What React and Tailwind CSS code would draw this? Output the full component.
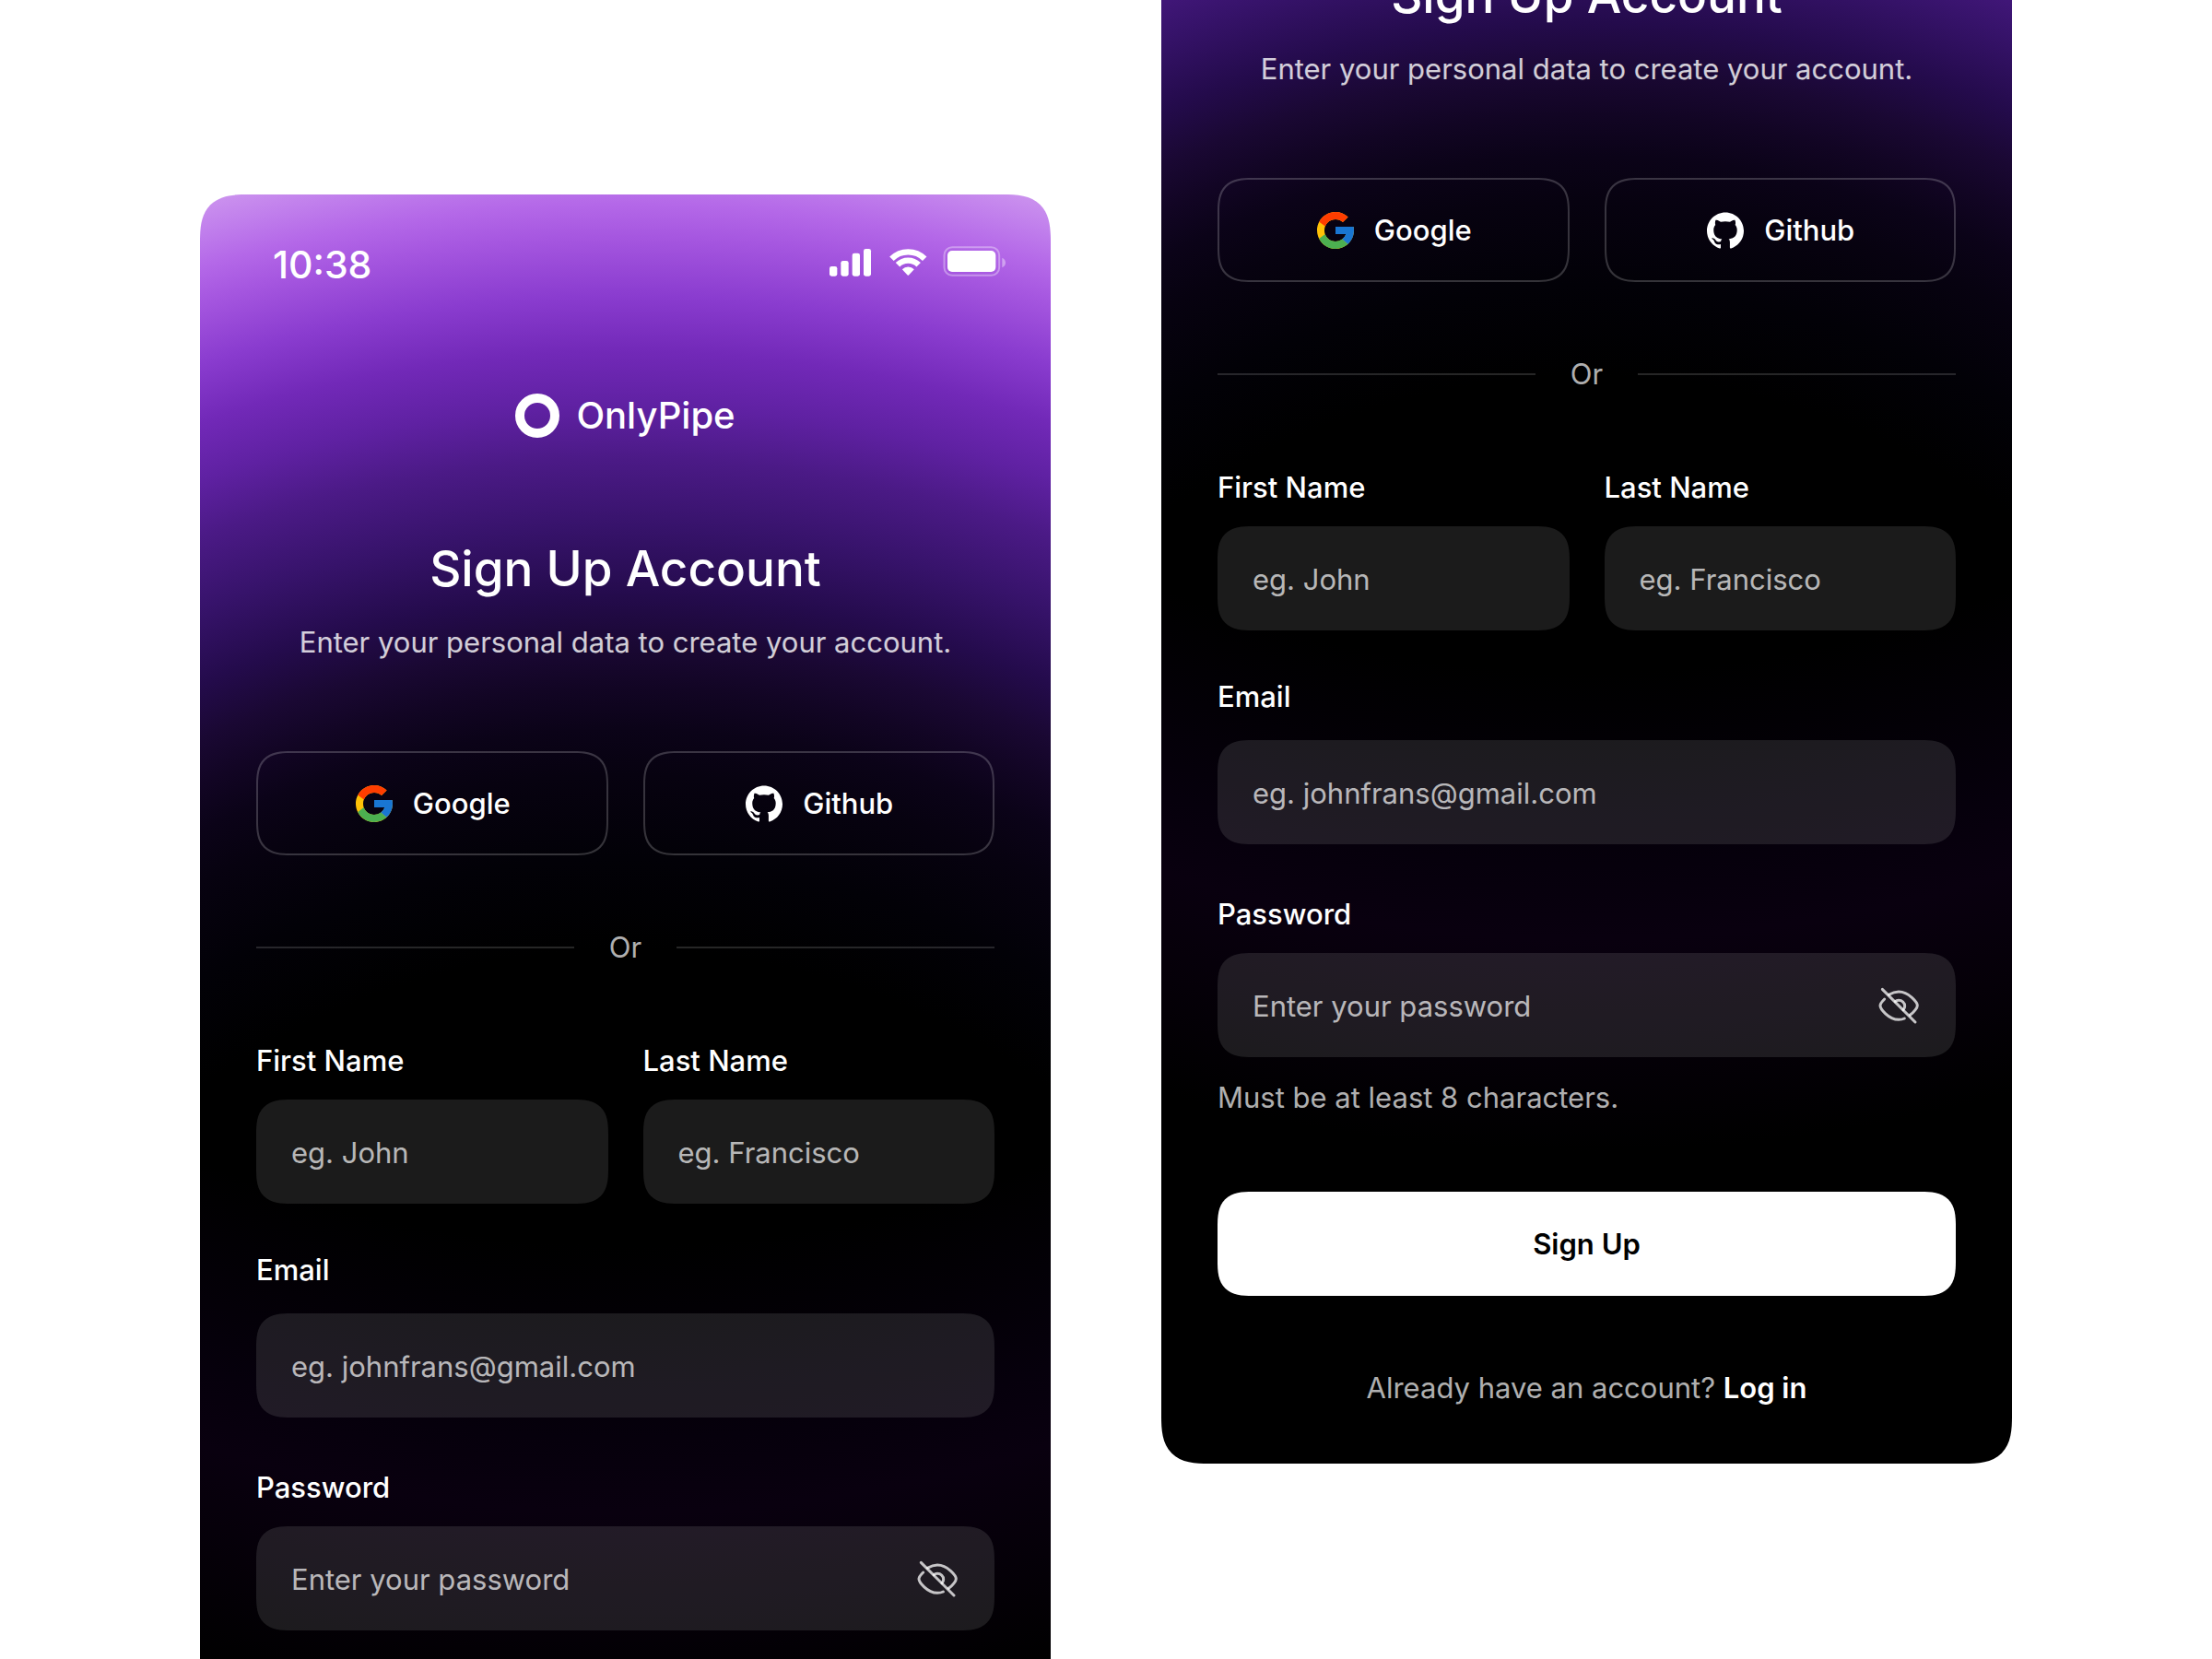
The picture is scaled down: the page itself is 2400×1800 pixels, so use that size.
import { useId } from "react";
import { SiGithub } from "react-icons/si";

const controlCorners =
  "rounded-[28px] supports-[corner-shape:squircle]:rounded-[38px] supports-[corner-shape:squircle]:[corner-shape:superellipse(1.5)]";
const cardCorners =
  "rounded-[38px] supports-[corner-shape:squircle]:rounded-[52px] supports-[corner-shape:squircle]:[corner-shape:superellipse(1.5)]";

function StatusIcons() {
  return (
    <svg className="h-10 w-[195px]" viewBox="595 219 585 120" fill="white" role="img" aria-label="Signal, Wi-Fi and battery">
      <rect x="601" y="297" width="25" height="32" rx="7" />
      <rect x="638" y="279" width="25" height="50" rx="7" />
      <rect x="675" y="254" width="25" height="75" rx="7" />
      <rect x="712" y="240" width="24" height="89" rx="7" />
      <path d="M803.3 272.3A76 76 0 0 1 910.7 272.3" fill="none" stroke="white" strokeWidth="19" />
      <path d="M823 292A48 48 0 0 1 891 292" fill="none" stroke="white" strokeWidth="19" />
      <path d="M837.5 306.5A27.5 27.5 0 0 1 876.5 306.5L859 325.500Q857 327.500 855 325.500Z" />
      <rect x="974.500" y="234.500" width="179" height="92" rx="26" fill="none" stroke="white" strokeOpacity="0.35" strokeWidth="6" />
      <rect x="985" y="246" width="157" height="69" rx="15" />
      <path d="M1163 269Q1174 274 1174 285Q1174 296 1163 301Z" fillOpacity="0.4" />
    </svg>
  );
}

function GoogleIcon() {
  return (
    <svg className="size-10" viewBox="4 4 40 40" aria-hidden="true">
      <path fill="#FFC107" d="M43.611 20.083H42V20H24v8h11.303c-1.649 4.657-6.080 8-11.303 8-6.627 0-12-5.373-12-12s5.373-12 12-12c3.059 0 5.842 1.154 7.961 3.039l5.657-5.657C34.046 6.053 29.268 4 24 4 12.955 4 4 12.955 4 24s8.955 20 20 20 20-8.955 20-20c0-1.341-.138-2.650-.389-3.917z" />
      <path fill="#FF3D00" d="m6.306 14.691 6.571 4.819C14.655 15.108 18.961 12 24 12c3.059 0 5.842 1.154 7.961 3.039l5.657-5.657C34.046 6.053 29.268 4 24 4 16.318 4 9.656 8.337 6.306 14.691z" />
      <path fill="#4CAF50" d="M24 44c5.166 0 9.860-1.977 13.409-5.192l-6.190-5.238A11.910 11.910 0 0 1 24 36c-5.202 0-9.619-3.317-11.283-7.946l-6.522 5.025C9.505 39.556 16.227 44 24 44z" />
      <path fill="#1976D2" d="M43.611 20.083H42V20H24v8h11.303a12.040 12.040 0 0 1-4.087 5.571l.003-.002 6.190 5.238C36.971 39.205 44 34 44 24c0-1.341-.138-2.650-.389-3.917z" />
    </svg>
  );
}

function EyeOffIcon() {
  return (
    <svg className="size-11" viewBox="0 0 132 132" fill="none" stroke="currentColor" strokeWidth="9" strokeLinecap="round" strokeLinejoin="round" aria-hidden="true">
      <path d="M13 13 120 120" />
      <path d="M20 45C11 54 6 61 6 66C6 76 32 112 66 112C73 112 79 111 85 108" />
      <path d="M34 31C44 25 54 21 66 21C100 21 127 57 127 66C127 73 116 88 103 97" />
      <path d="M55 53C58 50 62 49 66 49C77 49 86 57 86 68C86 73 84 77 81 80" />
    </svg>
  );
}

function SocialButton({ icon, children }) {
  return (
    <button type="button" className={`flex h-[113px] items-center justify-center gap-[22px] border-2 border-white/20 pl-0.5 font-medium text-white ${controlCorners}`}>
      {icon}
      {children}
    </button>
  );
}

function Field({ label, gap = "gap-[22px]", className = "", trailing, ...input }) {
  const id = useId();
  return (
    <div className={`flex min-w-0 flex-col ${gap} ${className}`}>
      <label htmlFor={id} className="font-medium text-white">{label}</label>
      <div className="relative">
        <input
          id={id}
          className={`h-[113px] w-full bg-[#ffffff1b] px-[38px] pt-0.5 text-white outline-none placeholder:text-white/70 ${controlCorners}`}
          {...input}
        />
        {trailing}
      </div>
    </div>
  );
}

function SignUpCard({ className }) {
  return (
    <main
      className={`bg-black bg-[radial-gradient(circle_at_50%_-60px,transparent_1200px,#06000c_1410px,#09000f_1490px,#050008_1600px,transparent_1720px),radial-gradient(circle_at_50%_1600px,#000_780px,#020107_880px,#070210_970px,#0b0318_1020px,#120524_1065px,#1a0833_1110px,#240b4c_1165px,#37136b_1240px,#4b1a86_1313px,#5f21a2_1370px,#7229b8_1430px,#8a3ccf_1490px,#a657e0_1555px,#b468e8_1590px,#c07eec_1625px,#cf99ef_1670px)] pt-[52px] pb-[62px] text-[31px] leading-10 ${cardCorners} ${className}`}
    >
      <div className="flex items-start justify-between pr-[47px] pl-[79px] text-[41px] leading-[48px] font-medium text-white">
        <time>10:38</time>
        <StatusIcons />
      </div>

      <form className="flex flex-col px-[61px]" onSubmit={(e) => e.preventDefault()}>
        <div className="mt-[116px] flex items-center justify-center gap-[18px] text-[40px] leading-[48px] font-medium text-white">
          <span className="size-12 rounded-full border-[10px] border-white" />
          OnlyPipe
        </div>
        <h1 className="mt-[110px] text-center text-[53px] leading-[64px] font-medium text-white">Sign Up Account</h1>
        <p className="mt-7 text-center text-white/80">Enter your personal data to create your account.</p>

        <div className="mt-[98px] grid grid-cols-2 gap-[38px]">
          <SocialButton icon={<GoogleIcon />}>Google</SocialButton>
          <SocialButton icon={<SiGithub className="size-10" aria-hidden="true" />}>Github</SocialButton>
        </div>

        <div className="mt-20 flex items-center gap-[38px] text-white/70">
          <span className="h-0.5 flex-1 bg-white/15" />
          Or
          <span className="h-0.5 flex-1 bg-white/15" />
        </div>

        <div className="mt-[83px] grid grid-cols-2 gap-[38px]">
          <Field label="First Name" type="text" placeholder="eg. John" />
          <Field label="Last Name" type="text" placeholder="eg. Francisco" />
        </div>
        <Field className="mt-[52px]" gap="gap-[27px]" label="Email" type="email" placeholder="eg. johnfrans@gmail.com" />
        <Field
          className="mt-[56px]"
          label="Password"
          type="password"
          placeholder="Enter your password"
          trailing={
            <button type="button" aria-label="Show password" className="absolute inset-y-0 right-10 flex items-center text-white/75">
              <EyeOffIcon />
            </button>
          }
        />
        <p className="mt-6 text-white/70">Must be at least 8 characters.</p>

        <button type="submit" className={`mt-[82px] h-[113px] bg-white font-semibold text-black ${controlCorners}`}>Sign Up</button>
        <p className="mt-20 text-center text-white/70">
          Already have an account? <a href="#login" className="font-semibold text-white">Log in</a>
        </p>
      </form>
    </main>
  );
}

export default function App() {
  return (
    <div className="grid h-screen grid-cols-2 items-start gap-[120px] overflow-hidden bg-white px-[217px] font-['Inter',sans-serif]">
      <SignUpCard className="mt-[211px]" />
      <SignUpCard className="-mt-[411px]" />
    </div>
  );
}
